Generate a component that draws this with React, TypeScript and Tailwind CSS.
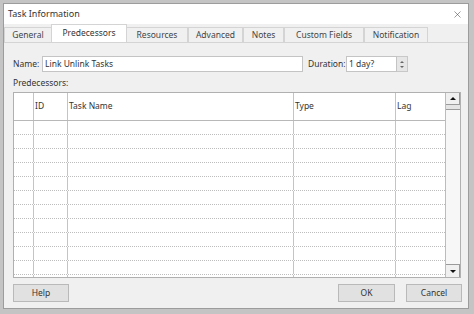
import { X } from 'lucide-react'

const tabs = ['General', 'Predecessors', 'Resources', 'Advanced', 'Notes', 'Custom Fields', 'Notification']
const tabWidths = [48, 76, 62, 55, 41, 80, 64]

// grid columns: selector, ID, Task Name, Type, Lag
const cols = [
  { label: '', w: 'w-[20px]' },
  { label: 'ID', w: 'w-[34px]' },
  { label: 'Task Name', w: 'w-[226px]' },
  { label: 'Type', w: 'w-[102px]' },
  { label: 'Lag', w: 'flex-1' },
]

const rows = Array.from({ length: 12 })

function Button({ label, className }: { label: string; className?: string }) {
  return (
    <div
      className={`h-[18px] flex items-center justify-center bg-[#e1e1e1] border border-[#b9b9b9] text-[8.5px] text-[#333] ${className ?? ''}`}
    >
      {label}
    </div>
  )
}

export default function App() {
  return (
    <div
      className="w-[474px] h-[314px] bg-[#c4c4c4] pt-[3px] pl-[3px] overflow-hidden"
      style={{ fontFamily: '"Noto Sans", "Open Sans", sans-serif' }}
    >
      <div className="w-[466px] h-[306px] border border-[#9c9c9c] bg-[#f0f0f0] flex flex-col">
        {/* title bar */}
        <div className="h-[20px] bg-white flex items-center justify-between pl-[4px] pr-[5px]">
          <span className="text-[9px] text-[#333]">Task Information</span>
          <X className="w-[11px] h-[11px] text-[#444]" strokeWidth={1.2} />
        </div>

        {/* tabs */}
        <div className="h-[18px] flex items-end">
          {tabs.map((t, i) => {
            const active = i === 1
            return (
              <div
                key={t}
                style={{ width: tabWidths[i] }}
                className={
                  active
                    ? 'h-[18px] bg-white border border-b-0 border-[#d4d4d4] flex items-center justify-center text-[8.5px] text-[#333] -mx-px relative z-10'
                    : 'h-[15px] bg-[#f0f0f0] border border-b-0 border-[#d4d4d4] flex items-center justify-center text-[8.5px] text-[#444]'
                }
              >
                {t}
              </div>
            )
          })}
        </div>

        {/* panel */}
        <div className="flex-1 border-t border-[#d4d4d4] px-[9px] flex flex-col">
          <div className="mt-[13px] h-[16px] flex items-center text-[8.5px] text-[#333] whitespace-nowrap">
            <span className="w-[29px]">Name:</span>
            <div className="w-[261px] h-[16px] bg-white border border-[#c4c4c4] flex items-center pl-[2px]">
              Link Unlink Tasks
            </div>
            <span className="ml-[5px] w-[38px]">Duration:</span>
            <div className="w-[51px] h-[16px] bg-white border border-[#c4c4c4] flex items-center pl-[2px]">
              1 day?
            </div>
            <div className="w-[11px] h-[16px] bg-[#e6e6e6] border border-[#c8c8c8] border-l-0 flex flex-col items-center justify-center gap-[3px]">
              <span className="w-0 h-0 border-l-[2px] border-r-[2px] border-b-[2px] border-l-transparent border-r-transparent border-b-[#666]" />
              <span className="w-0 h-0 border-l-[2px] border-r-[2px] border-t-[2px] border-l-transparent border-r-transparent border-t-[#666]" />
            </div>
          </div>

          <div className="mt-[5px] h-[12px] leading-[12px] text-[8.5px] text-[#333]">Predecessors:</div>

          {/* grid */}
          <div className="mt-[3px] w-[448px] h-[186px] border border-[#b0b0b0] bg-white flex overflow-hidden">
            <div className="flex-1 flex flex-col overflow-hidden">
              <div className="h-[28px] flex border-b border-[#b8b8b8] shrink-0">
                {cols.map((c, i) => (
                  <div
                    key={i}
                    className={`${c.w} h-full flex items-center pl-[1px] text-[8.5px] text-[#333] ${i < cols.length - 1 ? 'border-r border-[#c4c4c4]' : ''}`}
                  >
                    {c.label}
                  </div>
                ))}
              </div>
              {rows.map((_, r) => (
                <div key={r} className="h-[14px] flex shrink-0 border-b border-dotted border-[#bdbdbd]">
                  {cols.map((c, i) => (
                    <div
                      key={i}
                      className={`${c.w} h-full ${i < cols.length - 1 ? 'border-r border-[#c4c4c4]' : ''}`}
                    />
                  ))}
                </div>
              ))}
            </div>

            {/* scrollbar */}
            <div className="w-[15px] border-l border-[#bcbcbc] bg-[#f7f7f7] flex flex-col justify-between">
              <div>
                <div className="h-[12px] bg-[#f0f0f0] border-b border-[#9a9a9a] border-r flex items-center justify-center">
                  <span className="w-0 h-0 border-l-[3px] border-r-[3px] border-b-[3px] border-l-transparent border-r-transparent border-b-[#111]" />
                </div>
                <div className="h-[5px] bg-[#e4e4e4] border-b border-[#9a9a9a]" />
              </div>
              <div className="h-[13px] bg-[#f0f0f0] border-t border-[#9a9a9a] border-r flex items-center justify-center">
                <span className="w-0 h-0 border-l-[3px] border-r-[3px] border-t-[3px] border-l-transparent border-r-transparent border-t-[#111]" />
              </div>
            </div>
          </div>

          {/* buttons */}
          <div className="mt-[6px] flex w-[449px]">
            <Button label="Help" className="w-[56px]" />
            <div className="flex-1" />
            <Button label="OK" className="w-[57px]" />
            <Button label="Cancel" className="w-[56px] ml-[11px]" />
          </div>
        </div>
      </div>
    </div>
  )
}
